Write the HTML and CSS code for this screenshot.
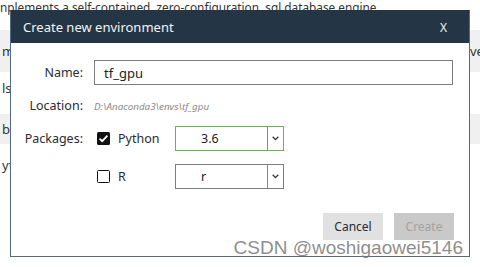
FILE: index.html
```html
<!DOCTYPE html>
<html>
<head>
<meta charset="utf-8">
<link rel="stylesheet" href="styles.css">
</head>
<body>
<div class="bg">
  <div class="bg-top">nplements a self-contained, zero-configuration, sql database engine</div>
  <div class="bg-row gray tall"><span>mkl</span><span>ve</span></div>
  <div class="bg-row tall up"><span>lsv</span><span></span></div>
  <div class="bg-row gray"><span>b</span><span></span></div>
  <div class="bg-row tall"><span>yt</span><span></span></div>
</div>

<div class="dialog">
  <div class="dlg-header">
    <span class="dlg-title">Create new environment</span>
    <span class="dlg-close">X</span>
  </div>
  <div class="form">
    <div class="label">Name:</div>
    <div class="field"><div class="input">tf_gpu</div></div>

    <div class="label">Location:</div>
    <div class="field"><span class="location">D:\Anaconda3\envs\tf_gpu</span></div>

    <div class="label">Packages:</div>
    <div class="field pkg">
      <div class="pkg-name">
        <span class="check checked"><svg width="13" height="13" viewBox="0 0 13 13"><path d="M2.6 6.6 L5.2 9.2 L10.4 3.6" fill="none" stroke="#fff" stroke-width="1.7"/></svg></span>
        <span>Python</span>
      </div>
      <div class="select focus">
        <span class="select-val">3.6</span>
        <span class="select-arrow"><svg width="7" height="5" viewBox="0 0 7 5"><path d="M0.7 0.8 L3.5 3.6 L6.3 0.8" fill="none" stroke="#333" stroke-width="1.3"/></svg></span>
      </div>
    </div>

    <div class="label"></div>
    <div class="field pkg last">
      <div class="pkg-name">
        <span class="check"></span>
        <span>R</span>
      </div>
      <div class="select">
        <span class="select-val">r</span>
        <span class="select-arrow"><svg width="7" height="5" viewBox="0 0 7 5"><path d="M0.7 0.8 L3.5 3.6 L6.3 0.8" fill="none" stroke="#333" stroke-width="1.3"/></svg></span>
      </div>
    </div>
  </div>
  <div class="buttons">
    <button class="btn cancel">Cancel</button>
    <button class="btn create">Create</button>
  </div>
</div>

<div class="watermark">CSDN @woshigaowei5146</div>
</body>
</html>
```

FILE: styles.css
```css
html, body {
  margin: 0;
  padding: 0;
  background: #fff;
  width: 480px;
  height: 267px;
  overflow: hidden;
  font-family: "Noto Sans", "Open Sans", sans-serif;
}

.bg {
  display: flex;
  flex-direction: column;
  color: #333;
  font-size: 11.8px;
}

.bg-top {
  box-sizing: border-box;
  height: 30px;
  line-height: 12px;
  padding-top: 1px;
  white-space: nowrap;
}

.bg-row {
  display: flex;
  justify-content: space-between;
  align-items: center;
  height: 30px;
  padding: 0 0 0 2px;
  font-size: 13px;
}

.bg-row.tall {
  height: 42px;
}

.bg-row.up {
  align-items: flex-start;
  padding-top: 7px;
  box-sizing: border-box;
}

.bg-row.gray {
  background: #f0f0f0;
}

.bg-row span:last-child {
  width: 10px;
  overflow: hidden;
}

.dialog {
  position: absolute;
  left: 10px;
  top: 10px;
  width: 458px;
  height: 245px;
  border: 1px solid #4e6d84;
  border-top-color: #243645;
  background: #fff;
  display: flex;
  flex-direction: column;
}

.dlg-header {
  height: 32px;
  background: #243645;
  color: #f2f4f6;
  display: flex;
  align-items: center;
  justify-content: space-between;
  padding: 0 22px 0 12px;
  font-size: 13px;
}

.dlg-close {
  font-size: 12px;
}

.form {
  display: grid;
  grid-template-columns: 72px 1fr;
  grid-template-rows: 25px 41px 25px 38px;
  column-gap: 11px;
  padding: 17px 16px 0 0;
  font-size: 12.5px;
  color: #2b2b33;
}

.label {
  text-align: right;
  align-self: center;
}

.field {
  display: flex;
  align-items: center;
}

.input {
  box-sizing: border-box;
  width: 100%;
  height: 25px;
  border: 1px solid #7d7d7d;
  padding-left: 9px;
  display: flex;
  align-items: center;
  font-size: 13px;
  color: #222;
}

.location {
  font-size: 9.8px;
  font-style: italic;
  color: #8a8a8a;
  padding-top: 2px;
}

.pkg.last {
  align-self: end;
}

.pkg-name {
  width: 81px;
  display: flex;
  align-items: center;
  gap: 8px;
  padding-left: 3px;
  box-sizing: border-box;
}

.check {
  box-sizing: border-box;
  width: 13px;
  height: 13px;
  border: 1.6px solid #111;
  border-radius: 1.5px;
  background: #fff;
  display: flex;
}

.check.checked {
  background: #111;
  border: none;
}

.select {
  box-sizing: border-box;
  width: 109px;
  height: 25px;
  border: 1px solid #7d7d7d;
  display: flex;
  align-items: stretch;
}

.select.focus {
  border-color: #6ab44e;
}

.select-val {
  flex: 1;
  padding-left: 25px;
  display: flex;
  align-items: center;
  color: #222;
}

.select-arrow {
  width: 15px;
  border-left: 1px solid #8a8a8a;
  display: flex;
  align-items: center;
  justify-content: center;
}

.buttons {
  display: flex;
  justify-content: flex-end;
  gap: 11px;
  padding: 24px 15px 0 0;
}

.btn {
  width: 60px;
  height: 27px;
  border: none;
  font-family: "Noto Sans", "Open Sans", sans-serif;
  font-size: 12px;
  padding: 0;
}

.btn.cancel {
  background: #e1e1e1;
  color: #1c2b3a;
}

.btn.create {
  background: #c9c9c9;
  color: #a3a3a3;
}

.watermark {
  position: absolute;
  right: 17px;
  top: 238px;
  font-family: "Liberation Sans", Arial, sans-serif;
  font-size: 19px;
  line-height: 19px;
  color: rgba(120, 120, 120, 0.85);
  white-space: nowrap;
}
```
